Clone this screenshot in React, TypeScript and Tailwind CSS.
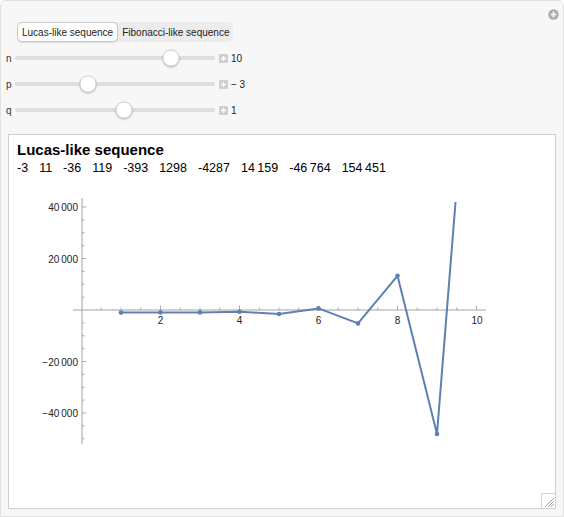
import React from "react"

const seq = ["-3", "11", "-36", "119", "-393", "1298", "-4287", "14\u2009159", "-46\u2009764", "154\u2009451"]

const pts: [number, number][] = [
  [121, 312.6],
  [160.5, 312.4],
  [200, 312.4],
  [239.5, 311.8],
  [279, 314],
  [318.5, 308.4],
  [358, 323.4],
  [397.5, 275.8],
  [437, 434],
  [476, -54],
]

function Slider({ label, pos, value }: { label: string; pos: number; value: string }) {
  return (
    <div className="flex h-[26px] items-center">
      <span className="w-[9px] pl-[5px] box-content text-[10px] text-[#333]">{label}</span>
      <div className="relative h-[4px] w-[200px] rounded-full bg-[#dedede]">
        <div
          className="absolute top-1/2 h-[17px] w-[17px] -translate-x-1/2 -translate-y-1/2 rounded-full border border-[#d4d4d4] bg-white shadow-[0_1px_2px_rgba(0,0,0,0.25)]"
          style={{ left: pos }}
        />
      </div>
      <div className="ml-[4px] flex h-[9px] w-[9px] items-center justify-center rounded-[1px] bg-[#cfcfcf]">
        <svg width="7" height="7" viewBox="0 0 7 7">
          <path d="M3.5 1v5M1 3.5h5" stroke="#fff" strokeWidth="1.4" />
        </svg>
      </div>
      <span className="ml-[3px] text-[10px] text-[#222]">{value}</span>
    </div>
  )
}

function Plot() {
  const xTicks: React.ReactNode[] = []
  for (let i = 1; i <= 20; i++) {
    const x = 81.5 + i * 19.75
    const major = i % 4 === 0
    xTicks.push(<line key={"x" + i} x1={x} x2={x} y1={310} y2={major ? 305.5 : 307.5} stroke="#999" strokeWidth="0.8" />)
  }
  const yTicks: React.ReactNode[] = []
  for (let v = -50000; v <= 40000; v += 5000) {
    if (v === 0) continue
    const y = 310 - v * 0.002575
    const major = v % 20000 === 0
    yTicks.push(<line key={"y" + v} x1={82} x2={major ? 86.5 : 84.5} y1={y} y2={y} stroke="#999" strokeWidth="0.8" />)
  }
  const d = pts.map((p, i) => (i ? "L" : "M") + p[0] + " " + p[1]).join(" ")
  return (
    <svg width="546" height="325" className="block">
      <defs>
        <clipPath id="clip">
          <rect x="70" y="202" width="420" height="250" />
        </clipPath>
      </defs>
      <g transform="translate(-9,-183)">
        <line x1={73} x2={486} y1={310} y2={310} stroke="#999" strokeWidth="0.9" />
        <line x1={82} x2={82} y1={198} y2={444} stroke="#999" strokeWidth="0.9" />
        {xTicks}
        {yTicks}
        <g fontFamily="'Liberation Sans', Arial, sans-serif" fontSize="10" fill="#222">
          <text x={160.5} y={324} textAnchor="middle">2</text>
          <text x={239.5} y={324} textAnchor="middle">4</text>
          <text x={318.5} y={324} textAnchor="middle">6</text>
          <text x={397.5} y={324} textAnchor="middle">8</text>
          <text x={477} y={324} textAnchor="middle">10</text>
          <text x={78} y={211} textAnchor="end">40{"\u2009"}000</text>
          <text x={78} y={263} textAnchor="end">20{"\u2009"}000</text>
          <text x={78} y={366} textAnchor="end">{"\u2212"}20{"\u2009"}000</text>
          <text x={78} y={417} textAnchor="end">{"\u2212"}40{"\u2009"}000</text>
        </g>
        <g clipPath="url(#clip)">
          <path d={d} fill="none" stroke="#5e81b5" strokeWidth="2" strokeLinejoin="round" />
          {pts.slice(0, 9).map((p, i) => (
            <circle key={i} cx={p[0]} cy={p[1]} r="2.3" fill="#5e81b5" />
          ))}
        </g>
      </g>
    </svg>
  )
}

export default function App() {
  return (
    <div
      className="relative h-[517px] w-[564px] overflow-hidden rounded-t-[6px] border border-[#e2e2e2] bg-[#f7f7f7]"
      style={{ fontFamily: "'Liberation Sans', Arial, sans-serif" }}
    >
      <svg className="absolute right-[4px] top-[8px]" width="11" height="11" viewBox="0 0 11 11">
        <circle cx="5.5" cy="5.5" r="5.2" fill="#a9a9a9" />
        <path d="M5.5 2.6v5.8M2.6 5.5h5.8" stroke="#fff" strokeWidth="1.7" />
      </svg>
      <div className="flex pl-[16px] pt-[21px]">
        <div className="flex h-[20px] items-stretch rounded-[5px] bg-[#ececec] text-[10px] text-[#222]">
          <div className="flex items-center rounded-[5px] border border-[#c9c9c9] bg-white px-[4px] shadow-[0_0.5px_1px_rgba(0,0,0,0.1)]">
            Lucas-like sequence
          </div>
          <div className="flex items-center px-[4px]">Fibonacci-like sequence</div>
        </div>
      </div>
      <div className="mt-[3px] flex flex-col">
        <Slider label="n" pos={156} value="10" />
        <Slider label="p" pos={73} value={"\u2212 3"} />
        <Slider label="q" pos={109} value="1" />
      </div>
      <div className="relative ml-[7px] mt-[11px] h-[375px] w-[548px] border border-[#cfcfcf] bg-white">
        <div className="h-[48px] pl-[8px] pt-[6px] text-[#000]">
          <div className="text-[15px] font-bold leading-[18px]">Lucas-like sequence</div>
          <div className="mt-[1px] flex gap-[11px] text-[12.5px] leading-[16px]">
            {seq.map((s, i) => (
              <span key={i}>{s}</span>
            ))}
          </div>
        </div>
        <Plot />
        <div className="absolute bottom-0 right-0 h-[15px] w-[14px] border-l border-t border-[#d4d4d4] bg-white">
          <svg width="13" height="14" viewBox="0 0 13 14">
            <path d="M3 13L12 4M6 13L12 7M9 13L12 10" stroke="#8a8a8a" strokeWidth="0.8" />
          </svg>
        </div>
      </div>
    </div>
  )
}
